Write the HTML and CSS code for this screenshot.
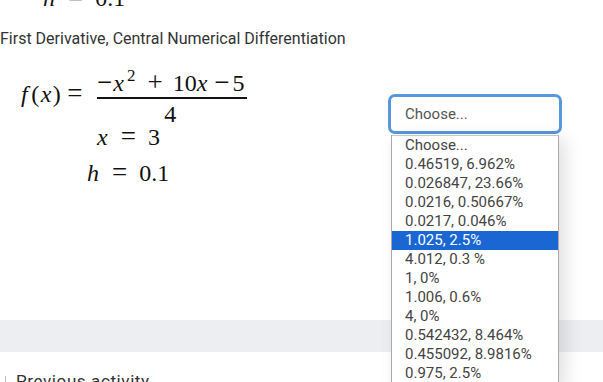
FILE: index.html
```html
<!DOCTYPE html>
<html>
<head>
<meta charset="utf-8">
<link rel="stylesheet" href="styles.css">
</head>
<body>
<div class="page">
  <div class="top-math"><i>h</i><span class="op">=</span>0.1</div>
  <p class="desc">First Derivative, Central Numerical Differentiation</p>
  <div class="question">
    <div class="math">
      <div class="fline">
        <span class="fx"><i class="f">f</i><span class="par">(</span><i>x</i><span class="par">)</span><span class="op">=</span></span>
        <span class="frac">
          <span class="num"><span class="neg">−</span><i class="nx">x</i><sup>2</sup><span class="op plus">+</span>10<i>x</i><span class="op minus">−</span>5</span>
          <span class="den">4</span>
        </span>
      </div>
      <div class="mline l1"><i>x</i><span class="op">=</span>3</div>
      <div class="mline l2"><i>h</i><span class="op">=</span>0.1</div>
    </div>
    <div class="select-wrap">
      <div class="select">Choose...</div>
      <ul class="options">
        <li>Choose...</li>
        <li>0.46519, 6.962%</li>
        <li>0.026847, 23.66%</li>
        <li>0.0216, 0.50667%</li>
        <li>0.0217, 0.046%</li>
        <li class="sel">1.025, 2.5%</li>
        <li>4.012, 0.3 %</li>
        <li>1, 0%</li>
        <li>1.006, 0.6%</li>
        <li>4, 0%</li>
        <li>0.542432, 8.464%</li>
        <li>0.455092, 8.9816%</li>
        <li>0.975, 2.5%</li>
      </ul>
    </div>
  </div>
  <div class="band"></div>
  <div class="nav"><span class="mark"></span>Previous activity</div>
</div>
</body>
</html>
```
FILE: styles.css
```css
html, body {
  margin: 0;
  padding: 0;
  background: #fff;
  overflow: hidden;
}
.page {
  width: 603px;
  height: 382px;
  overflow: hidden;
  font-family: Roboto, "Liberation Sans", sans-serif;
  color: #333;
}
.top-math {
  font-family: "Liberation Serif", serif;
  font-size: 24px;
  line-height: 28px;
  margin-top: -17px;
  padding-left: 43px;
  color: #111;
}
.op {
  font-size: 27px;
  padding: 0 12px 0 13px;
}
.desc {
  margin: 17px 0 0 0;
  font-size: 16px;
  line-height: 20px;
  color: #333;
}
.question {
  display: flex;
  margin-top: 19px;
  height: 252px;
}
.math {
  font-family: "Liberation Serif", serif;
  font-size: 24px;
  color: #111;
  width: 388px;
  display: flex;
  flex-direction: column;
}
.fline {
  display: flex;
  align-items: center;
  padding-left: 18px;
}
.fx {
  display: inline-block;
  width: 79px;
  white-space: nowrap;
  position: relative;
  top: -3px;
}
.f {
  padding-left: 3px;
  padding-right: 2px;
}
.par {
  padding: 0 1.5px;
}
.fx .op {
  padding: 0 0 0 5px;
}
.frac {
  display: flex;
  flex-direction: column;
  align-items: center;
}
.num {
  border-bottom: 2px solid #111;
  padding: 0 2px 0 0;
  line-height: 28px;
  white-space: nowrap;
}
.neg {
  font-size: 27px;
}
.nx {
  padding-left: 1px;
}
.num sup {
  font-size: 17px;
  line-height: 0;
  position: relative;
  top: -1px;
  padding-left: 3px;
}
.num .plus {
  padding: 0 10px 0 12px;
}
.num .minus {
  padding: 0 3px 0 7px;
}
.den {
  margin-top: 5px;
  line-height: 20px;
  padding-right: 3px;
}
.mline {
  line-height: 28px;
}
.l1 {
  margin-top: -2px;
  padding-left: 97px;
}
.l2 {
  margin-top: 7px;
  padding-left: 87px;
}
.select-wrap {
  position: relative;
  margin-top: 26px;
  width: 174px;
}
.select {
  box-sizing: border-box;
  height: 40px;
  border: 3px solid #5797dc;
  border-radius: 7px;
  padding-left: 14px;
  font-size: 15px;
  line-height: 34px;
  color: #555;
}
.options {
  position: absolute;
  left: 3px;
  top: 41px;
  width: 168px;
  box-sizing: border-box;
  margin: 0;
  padding: 0 0 2px;
  list-style: none;
  background: #fff;
  border: 1px solid #a9a9a9;
  border-top-color: #c8c8c8;
  border-radius: 0 0 5px 5px;
  box-shadow: 6px 4px 18px rgba(0,0,0,0.13);
  font-size: 15px;
  line-height: 19px;
  color: #444;
  z-index: 2;
}
.options li {
  padding-left: 13px;
  height: 19px;
}
.options li.sel {
  background: #1a66d2;
  color: #fff;
}
.band {
  height: 32px;
  background: #eceef1;
}
.nav {
  margin-top: 19px;
  padding-left: 16px;
  font-size: 17px;
  line-height: 20px;
  letter-spacing: 0.6px;
  color: #333;
  position: relative;
}
.mark {
  position: absolute;
  left: 5px;
  top: 5px;
  width: 1px;
  height: 9px;
  background: #bbb;
}
```
